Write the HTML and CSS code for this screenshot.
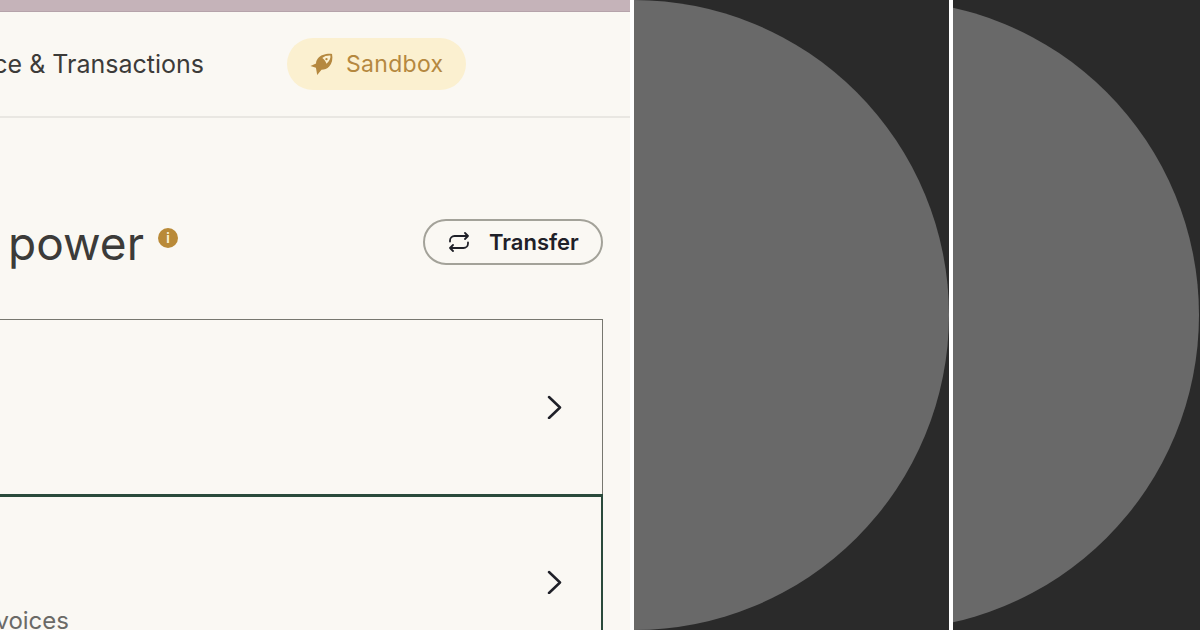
FILE: index.html
```html
<!DOCTYPE html>
<html lang="en">
<head>
<meta charset="utf-8">
<title>Balance &amp; Transactions</title>
<link rel="stylesheet" href="styles.css">
</head>
<body>
<div class="stage">
  <main class="app">
    <div class="topbar"></div>
    <header class="nav">
      <div class="nav-title"><span>Balance &amp; Transactions</span></div>
      <div class="pill">
        <svg class="fish" viewBox="0 0 24 24" aria-hidden="true">
          <path fill="#b5883f" d="M23 1C17 .5 11 2 8 6 6.800 7.600 6.300 9.300 6.300 11L.5 13.500l5.700 2 1.300 7.500 4.500-5.500c3-.2 6-1.300 8-3.500C23 11 24 6 23 1Z"/>
          <path fill="#fbf0d0" d="M21.300 2.700c-3.400-.2-6.300.7-8.500 2.500 1.800 1.300 3.300 3.100 4.400 5.900 3.100-2.600 4.500-5 4.100-8.400Z"/>
          <circle cx="17.200" cy="6.400" r="1.200" fill="#b5883f"/>
        </svg>
        <span>Sandbox</span>
      </div>
    </header>
    <section class="heading">
      <div class="heading-title">
        <div class="heading-clip"><span>Spending power</span></div>
        <span class="info">i</span>
      </div>
      <button class="transfer">
        <svg class="repeat" viewBox="0 0 22 20" aria-hidden="true">
          <path d="M2 9.500V8.500C2 6 4 4 6.500 4H20M17 1l3 3-3 3M20 10.500v1C20 14 18 16 15.500 16H2M5 13l-3 3 3 3"/>
        </svg>
        <span>Transfer</span>
      </button>
    </section>
    <div class="cards">
      <article class="card">
        <svg class="chev" viewBox="0 0 16 24" aria-hidden="true"><path d="M2 2l11 10.500L2 23"/></svg>
      </article>
      <article class="card card-active">
        <div class="card-note"><span>Pay invoices</span></div>
        <svg class="chev" viewBox="0 0 16 24" aria-hidden="true"><path d="M2 2l11 10.500L2 23"/></svg>
      </article>
    </div>
  </main>
  <div class="shade shade-wide"><div class="disc disc-wide"></div></div>
  <div class="shade shade-narrow"><div class="disc disc-narrow"></div></div>
</div>
</body>
</html>
```
FILE: styles.css
```css
* { box-sizing: border-box; }
html, body { margin: 0; padding: 0; background: #fff; }
body { font-family: Inter, Lato, sans-serif; }
.stage { display: flex; width: 1200px; height: 630px; overflow: hidden; gap: 4px; }
.app { width: 630px; height: 630px; flex: none; background: #faf8f3; overflow: hidden; display: flex; flex-direction: column; }
.topbar { height: 12px; flex: none; background: #c5b3b9; border-bottom: 1px solid #b5a3aa; }
.nav { height: 106px; flex: none; display: flex; align-items: center; border-bottom: 2px solid #e9e7e2; }
.nav-title { width: 204px; flex: none; display: flex; justify-content: flex-end; white-space: nowrap; font-size: 25px; color: #3c3b39; }
.pill { margin-left: 83px; width: 179px; height: 52px; border-radius: 26px; background: #fbf0d0; color: #b5883f; display: flex; align-items: center; padding-left: 23px; gap: 13px; font-size: 23px; letter-spacing: .3px; }
.fish { width: 23px; height: 23px; flex: none; }
.heading { height: 201px; flex: none; display: flex; justify-content: space-between; align-items: flex-start; padding: 101px 27px 0 0; }
.heading-title { display: flex; align-items: flex-start; }
.heading-clip { width: 144px; display: flex; justify-content: flex-end; white-space: nowrap; font-size: 46px; line-height: 48px; color: #3c3b39; }
.info { width: 20px; height: 20px; margin: 9px 0 0 14px; border-radius: 50%; background: #b98a38; color: #fbf0d0; font-size: 13px; font-weight: 700; line-height: 20px; text-align: center; }
.transfer { width: 180px; height: 46px; border: 2px solid #a3a299; border-radius: 23px; background: transparent; display: flex; align-items: center; padding: 0 0 0 23px; gap: 19px; font: 600 22px Inter, Lato, sans-serif; color: #1f2028; }
.repeat { width: 22px; height: 20px; flex: none; fill: none; stroke: #1f2028; stroke-width: 1.800; stroke-linecap: round; stroke-linejoin: round; }
.cards { width: 603px; flex: none; display: flex; flex-direction: column; }
.card { position: relative; height: 176px; flex: none; border: 1px solid #77776f; border-left: 0; display: flex; align-items: center; justify-content: flex-end; padding-right: 39px; }
.card-active { border-style: solid; border-color: #2a4a3b; border-width: 3px 2px 3px 0; margin-top: -1px; padding-right: 38px; }
.chev { width: 16px; height: 24px; flex: none; fill: none; stroke: #1f2028; stroke-width: 2.500; stroke-linecap: round; stroke-linejoin: round; }
.card-note { position: absolute; left: 0; top: 109px; width: 69px; display: flex; justify-content: flex-end; white-space: nowrap; font-size: 24px; color: #6b6a66; }
.shade { height: 630px; flex: none; background: #2a2a2a; overflow: hidden; display: flex; }
.shade-wide { width: 315px; }
.shade-narrow { width: 247px; }
.disc { width: 630px; height: 630px; flex: none; border-radius: 50%; background: #696969; }
.disc-wide { margin-left: -315px; }
.disc-narrow { margin-left: -384px; }
```
